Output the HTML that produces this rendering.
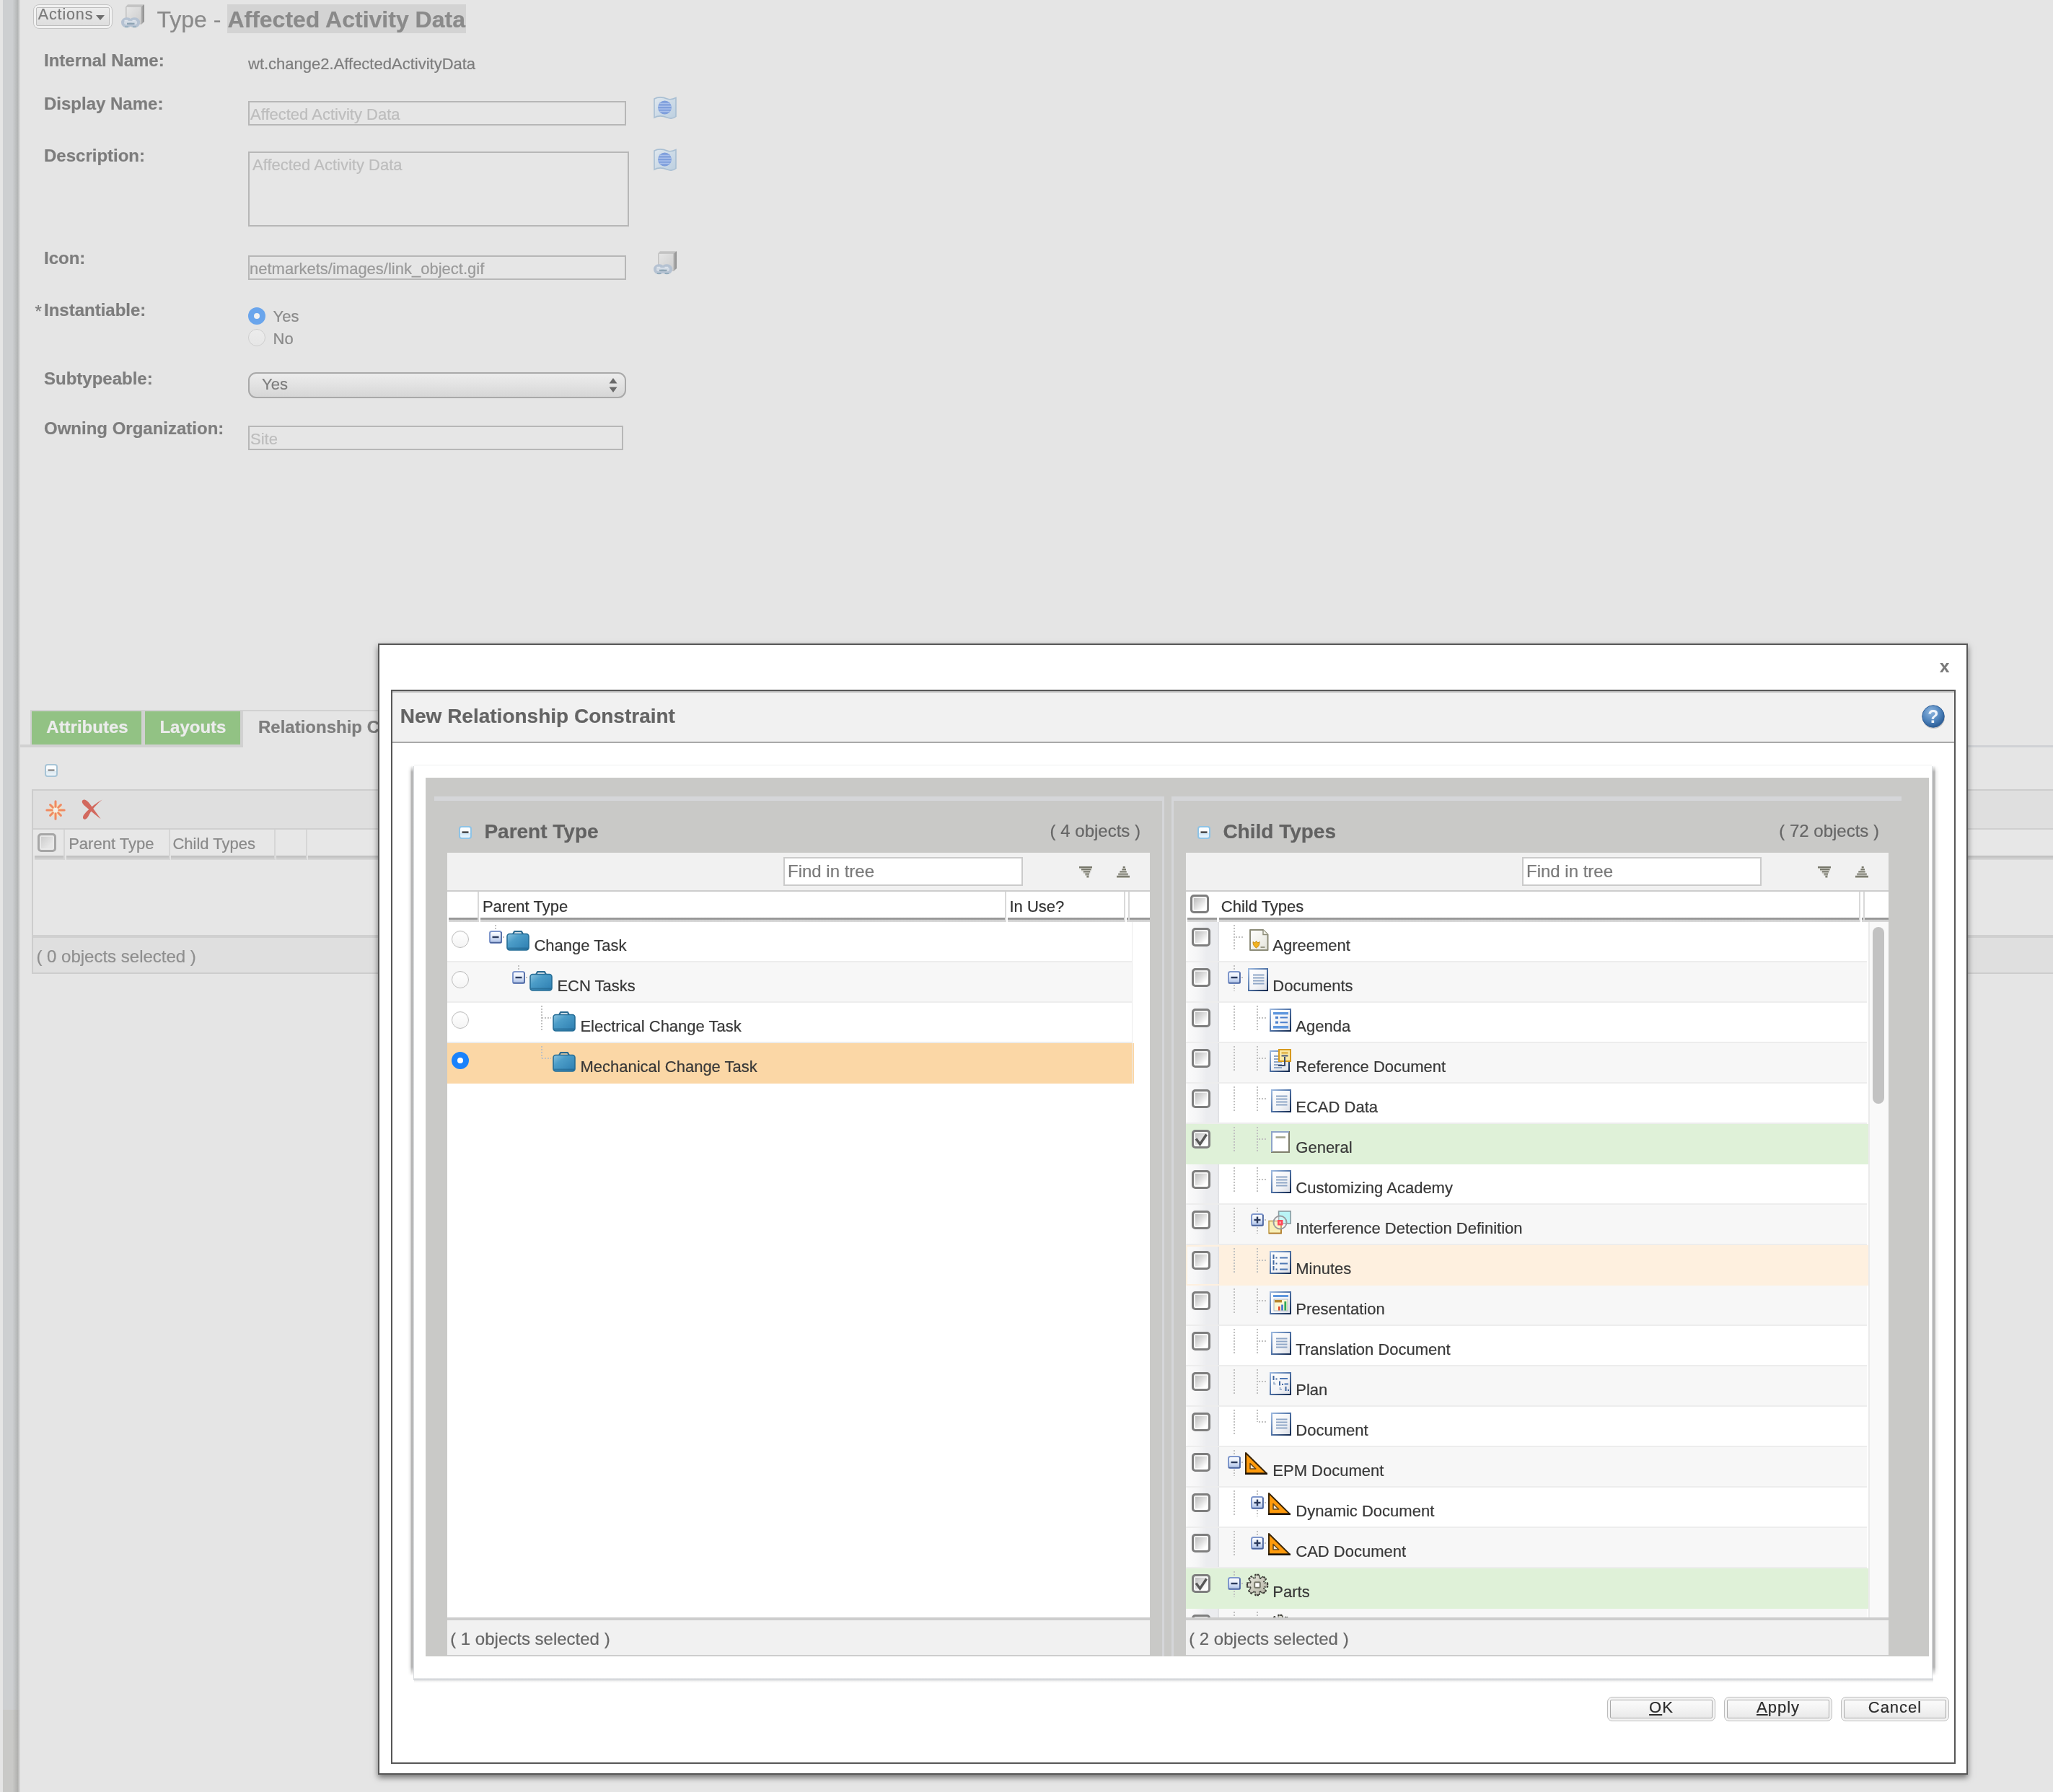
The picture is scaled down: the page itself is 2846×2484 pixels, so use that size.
<!DOCTYPE html>
<html><head><meta charset="utf-8"><title>Type - Affected Activity Data</title>
<style>
html,body{margin:0;padding:0;}
body{width:2846px;height:2484px;overflow:hidden;background:#e5e5e5;font-family:"Liberation Sans", Arial, sans-serif;position:relative;}
.a{position:absolute;box-sizing:border-box;}
.t{position:absolute;white-space:nowrap;-webkit-text-stroke:.22px currentColor;}
svg{position:absolute;overflow:visible;}
.cb{position:absolute;box-sizing:border-box;width:26px;height:26px;border:3px solid #7e7e7e;border-radius:5px;background:linear-gradient(135deg,#b4b4b4 0%,#dcdcdc 45%,#ffffff 80%);box-shadow:inset 0 0 0 2px rgba(255,255,255,.75);}
</style></head><body><div id="root" style="position:absolute;left:0;top:0;width:2846px;height:2484px;will-change:transform;">
<div class="a" style="left:4px;top:0px;width:24px;height:2370px;background:linear-gradient(90deg,#cdcfd1 0,#cdcfd1 56%,#b3b5b5 86%,#e0e0e0 100%);"></div><div class="a" style="left:4px;top:2370px;width:24px;height:114px;background:linear-gradient(90deg,#c9c9c7 0,#c9c9c7 56%,#b0b0ae 86%,#dedede 100%);"></div><div class="a" style="left:46px;top:6px;width:110px;height:34px;border:1px solid #c4c4c4;border-radius:8px;background:#f1f1f1;"></div><div class="a" style="left:50px;top:10px;width:102px;height:26px;border:1px solid #bdbdbd;border-radius:2px;background:linear-gradient(#ececec,#dedede);"></div><div class="t" style="left:52.8px;top:10.4px;font-size:21.5px;line-height:21.5px;color:#7a7a7a;letter-spacing:.85px;">Actions</div><svg style="left:133px;top:21px;" width="12" height="7" viewBox="0 0 12 7"><path d="M0 0 H12 L6 7 Z" fill="#6e6e6e"/></svg><svg style="left:168px;top:6px;" width="32" height="34" viewBox="0 0 32 34"><defs><linearGradient id="g1" x1="0" y1="0" x2="1" y2="1"><stop offset="0" stop-color="#e6e6e6"/><stop offset="1" stop-color="#cdcdcd"/></linearGradient>
<linearGradient id="g1s" x1="0" y1="0" x2="1" y2="0"><stop offset="0" stop-color="#b4b4b4"/><stop offset="1" stop-color="#8c8c8c"/></linearGradient></defs>
<g style="filter:blur(.45px)"><path d="M6 3.4 L9 0.2 H32 V24 L28.4 27.7 H6 Z" fill="#c3c3c3"/>
<path d="M27.4 3.8 L32 0.2 V24 L27.4 27.7 Z" fill="url(#g1s)"/>
<rect x="7.6" y="3.9" width="19.8" height="22.4" fill="url(#g1)"/></g>
<g style="filter:blur(.7px)">
<rect x="2" y="20.2" width="11.5" height="10" rx="5" fill="#d3dbe5" stroke="#b5c2d2" stroke-width="4"/>
<rect x="12.6" y="20.2" width="11.5" height="10" rx="5" fill="#d3dbe5" stroke="#b5c2d2" stroke-width="4"/>
<path d="M7.5 24.2 H18.5" stroke="#d4dce6" stroke-width="2.6"/>
<path d="M8 26.8 H18.5" stroke="#8da3b3" stroke-width="2.2"/>
<path d="M5 31.2 H10 M16 31.2 H21" stroke="#8aa6b6" stroke-width="1.6"/>
<path d="M4.5 22.5 H9 M15.5 22.5 H20" stroke="#dde4ec" stroke-width="1.6"/>
</g></svg><div class="a" style="left:315px;top:6px;width:331px;height:40px;background:#d3d3d3;"></div><div class="t" style="left:217.4px;top:10.6px;font-size:32px;line-height:32px;color:#8a8a8a;">Type - </div><div class="t" style="left:315.4px;top:10.6px;font-size:32px;line-height:32px;color:#8a8a8a;font-weight:bold;">Affected Activity Data</div><div class="t" style="left:61px;top:71.7px;font-size:24px;line-height:24px;color:#7d7d7d;font-weight:bold;">Internal Name:</div><div class="t" style="left:61px;top:132.2px;font-size:24px;line-height:24px;color:#7d7d7d;font-weight:bold;">Display Name:</div><div class="t" style="left:61px;top:203.7px;font-size:24px;line-height:24px;color:#7d7d7d;font-weight:bold;">Description:</div><div class="t" style="left:61px;top:346.4px;font-size:24px;line-height:24px;color:#7d7d7d;font-weight:bold;">Icon:</div><div class="t" style="left:61px;top:417.5px;font-size:24px;line-height:24px;color:#7d7d7d;font-weight:bold;">Instantiable:</div><div class="t" style="left:61px;top:512.5px;font-size:24px;line-height:24px;color:#7d7d7d;font-weight:bold;">Subtypeable:</div><div class="t" style="left:61px;top:582.2px;font-size:24px;line-height:24px;color:#7d7d7d;font-weight:bold;">Owning Organization:</div><div class="t" style="left:48.5px;top:419.7px;font-size:24px;line-height:24px;color:#7d7d7d;">*</div><div class="t" style="left:344px;top:77.9px;font-size:22px;line-height:22px;color:#7d7d7d;">wt.change2.AffectedActivityData</div><div class="a" style="left:344px;top:140px;width:524px;height:34px;border:2px solid #b7b7b7;background:#e6e6e6;"></div><div class="t" style="left:347px;top:148.0px;font-size:22px;line-height:22px;color:#bdbdbd;">Affected Activity Data</div><div class="a" style="left:344px;top:210px;width:528px;height:104px;border:2px solid #b7b7b7;background:#e6e6e6;"></div><div class="t" style="left:350px;top:218.2px;font-size:22px;line-height:22px;color:#bdbdbd;">Affected Activity Data</div><div class="a" style="left:344px;top:354px;width:524px;height:34px;border:2px solid #b7b7b7;background:#e6e6e6;"></div><div class="t" style="left:346px;top:361.8px;font-size:22px;line-height:22px;color:#9a9a9a;">netmarkets/images/link_object.gif</div><svg style="left:906px;top:134px;" width="32" height="32" viewBox="0 0 32 32"><defs><linearGradient id="g2" x1="0" y1="0" x2="1" y2="1"><stop offset="0" stop-color="#dfe7ee"/><stop offset="1" stop-color="#bccfe0"/></linearGradient></defs>
<path d="M1 3 C8 -1 14 1 19 3 C24 5 28 3 31 1.5 V27.5 C28 30 24 31 19 29 C14 27 8 25 1 29 Z" fill="url(#g2)" stroke="#a9bfd3" stroke-width="1.6"/>
<circle cx="15.5" cy="15" r="9.4" fill="#7f9fdc"/>
<path d="M8.4 9.5 H22.6 M6.6 13.2 H24.4 M6.6 16.9 H24.4 M8.4 20.6 H22.6" stroke="#a9c0ea" stroke-width="1.5"/></svg><svg style="left:906px;top:206px;" width="32" height="32" viewBox="0 0 32 32"><defs><linearGradient id="g3" x1="0" y1="0" x2="1" y2="1"><stop offset="0" stop-color="#dfe7ee"/><stop offset="1" stop-color="#bccfe0"/></linearGradient></defs>
<path d="M1 3 C8 -1 14 1 19 3 C24 5 28 3 31 1.5 V27.5 C28 30 24 31 19 29 C14 27 8 25 1 29 Z" fill="url(#g3)" stroke="#a9bfd3" stroke-width="1.6"/>
<circle cx="15.5" cy="15" r="9.4" fill="#7f9fdc"/>
<path d="M8.4 9.5 H22.6 M6.6 13.2 H24.4 M6.6 16.9 H24.4 M8.4 20.6 H22.6" stroke="#a9c0ea" stroke-width="1.5"/></svg><svg style="left:906px;top:348px;" width="32" height="34" viewBox="0 0 32 34"><defs><linearGradient id="g4" x1="0" y1="0" x2="1" y2="1"><stop offset="0" stop-color="#e6e6e6"/><stop offset="1" stop-color="#cdcdcd"/></linearGradient>
<linearGradient id="g4s" x1="0" y1="0" x2="1" y2="0"><stop offset="0" stop-color="#b4b4b4"/><stop offset="1" stop-color="#8c8c8c"/></linearGradient></defs>
<g style="filter:blur(.45px)"><path d="M6 3.4 L9 0.2 H32 V24 L28.4 27.7 H6 Z" fill="#c3c3c3"/>
<path d="M27.4 3.8 L32 0.2 V24 L27.4 27.7 Z" fill="url(#g4s)"/>
<rect x="7.6" y="3.9" width="19.8" height="22.4" fill="url(#g4)"/></g>
<g style="filter:blur(.7px)">
<rect x="2" y="20.2" width="11.5" height="10" rx="5" fill="#d3dbe5" stroke="#b5c2d2" stroke-width="4"/>
<rect x="12.6" y="20.2" width="11.5" height="10" rx="5" fill="#d3dbe5" stroke="#b5c2d2" stroke-width="4"/>
<path d="M7.5 24.2 H18.5" stroke="#d4dce6" stroke-width="2.6"/>
<path d="M8 26.8 H18.5" stroke="#8da3b3" stroke-width="2.2"/>
<path d="M5 31.2 H10 M16 31.2 H21" stroke="#8aa6b6" stroke-width="1.6"/>
<path d="M4.5 22.5 H9 M15.5 22.5 H20" stroke="#dde4ec" stroke-width="1.6"/>
</g></svg><div class="a" style="left:344px;top:426px;width:24px;height:24px;border-radius:50%;background:#6aa5ec;"></div><div class="a" style="left:352px;top:434px;width:8px;height:8px;border-radius:50%;background:#f2f2f2;"></div><div class="t" style="left:378.5px;top:428.4px;font-size:22px;line-height:22px;color:#8a8a8a;">Yes</div><div class="a" style="left:344px;top:456px;width:24px;height:24px;border-radius:50%;border:1.5px solid #cdcdcd;background:linear-gradient(#ececec,#e6e6e6);"></div><div class="t" style="left:378.5px;top:458.6px;font-size:22px;line-height:22px;color:#8a8a8a;">No</div><div class="a" style="left:344px;top:516px;width:524px;height:36px;border:2px solid #a9a9a9;border-radius:11px;background:linear-gradient(#ececec,#e2e2e2 50%,#d6d6d6);"></div><div class="t" style="left:363px;top:522.4px;font-size:22px;line-height:22px;color:#7d7d7d;">Yes</div><svg style="left:844px;top:524px;" width="12" height="20" viewBox="0 0 12 20"><path d="M6 0 L11.5 7.5 H0.5 Z M0.5 12.5 H11.5 L6 20 Z" fill="#6a6a6a"/></svg><div class="a" style="left:344px;top:590px;width:520px;height:34px;border:2px solid #b7b7b7;background:#e6e6e6;"></div><div class="t" style="left:347px;top:598.0px;font-size:22px;line-height:22px;color:#bdbdbd;">Site</div><div class="a" style="left:42px;top:984px;width:640px;height:2px;background:#d1d1d1;"></div><div class="a" style="left:680px;top:1033px;width:2166px;height:3px;background:#d0d2d5;"></div><div class="a" style="left:28px;top:1032px;width:309px;height:4px;background:#d1d1d1;"></div><div class="a" style="left:42px;top:984px;width:156px;height:50px;border:2px solid #d1d1d1;background:#92c284;"></div><div class="a" style="left:198px;top:984px;width:137px;height:50px;border:2px solid #d1d1d1;border-left-width:3px;background:#92c284;"></div><div class="a" style="left:335px;top:984px;width:2px;height:50px;background:#d1d1d1;"></div><div class="t" style="left:64.3px;top:995.7px;font-size:24px;line-height:24px;color:#ececec;font-weight:bold;">Attributes</div><div class="t" style="left:221.4px;top:995.7px;font-size:24px;line-height:24px;color:#ececec;font-weight:bold;">Layouts</div><div class="t" style="left:358px;top:995.7px;font-size:24px;line-height:24px;color:#7d7d7d;font-weight:bold;">Relationship Constraints</div><svg style="left:62px;top:1059px;" width="18" height="18" viewBox="0 0 18 18"><defs><linearGradient id="g5" x1="0" y1="0" x2="0" y2="1"><stop offset="0" stop-color="#ffffff"/><stop offset=".55" stop-color="#f4f9fd"/><stop offset=".56" stop-color="#dbe8f0"/><stop offset="1" stop-color="#f2f8fc"/></linearGradient></defs>
<rect x="1" y="1" width="16" height="16" rx="3" fill="url(#g5)" stroke="#a7c4d6" stroke-width="2"/>
<path d="M4.5 8.6 H13.5" stroke="#8a8a8a" stroke-width="2.4"/></svg><div class="a" style="left:44px;top:1094px;width:2810px;height:256px;border:2px solid #cdcdcd;"></div><div class="a" style="left:46px;top:1096px;width:2800px;height:52px;background:#dfdfdf;"></div><div class="a" style="left:46px;top:1148px;width:2800px;height:2px;background:#cfcfcf;"></div><svg style="left:63px;top:1109px;" width="28" height="28" viewBox="0 0 28 28"><circle cx="14" cy="14" r="9" fill="#f6e3bd" opacity=".8"/><circle cx="14" cy="14" r="3.2" fill="#f3efe9"/><path d="M18.8 14.0 L26.2 14.0" stroke="#f08a62" stroke-width="3" stroke-linecap="round"/><path d="M17.7 17.7 L21.4 21.4" stroke="#f08a62" stroke-width="3" stroke-linecap="round"/><path d="M14.0 18.8 L14.0 26.2" stroke="#f08a62" stroke-width="3" stroke-linecap="round"/><path d="M10.3 17.7 L6.6 21.4" stroke="#f08a62" stroke-width="3" stroke-linecap="round"/><path d="M9.2 14.0 L1.8 14.0" stroke="#f08a62" stroke-width="3" stroke-linecap="round"/><path d="M10.3 10.3 L6.6 6.6" stroke="#f08a62" stroke-width="3" stroke-linecap="round"/><path d="M14.0 9.2 L14.0 1.8" stroke="#f08a62" stroke-width="3" stroke-linecap="round"/><path d="M17.7 10.3 L21.4 6.6" stroke="#f08a62" stroke-width="3" stroke-linecap="round"/></svg><svg style="left:113px;top:1107.5px;filter:blur(.55px);" width="29" height="28" viewBox="0 0 29 28"><path d="M0.8 3.6 C0.4 1 3 -0.2 5.6 1 C8.2 2.2 10.2 4.6 12.2 7.2 C17 13.6 22 20.6 26.6 27 C20 22.2 11 14.8 3.6 8.2 C1.9 6.7 1 5.1 0.8 3.6 Z" fill="#d2695e"/>
<path d="M28.6 0.4 C22 6 14.2 14 10.6 21.2 C9.3 23.8 8 26.5 5.6 27.5 C3.4 28.3 1.6 26.9 2 24.4 C2.4 22 4.6 19.6 7 17 C13 10.6 21 4.6 28.6 0.4 Z" fill="#d2695e"/></svg><div class="a" style="left:46px;top:1150px;width:2800px;height:36px;background:#e7e7e7;"></div><div class="a" style="left:48px;top:1186px;width:40px;height:6px;background:linear-gradient(#bdbdbd,#c9c9c9 50%,#dadada);"></div><div class="a" style="left:88px;top:1150px;width:2px;height:42px;background:#d6d6d6;"></div><div class="a" style="left:92px;top:1186px;width:141.5px;height:6px;background:linear-gradient(#bdbdbd,#c9c9c9 50%,#dadada);"></div><div class="a" style="left:233.5px;top:1150px;width:2px;height:42px;background:#d6d6d6;"></div><div class="a" style="left:237px;top:1186px;width:142.5px;height:6px;background:linear-gradient(#bdbdbd,#c9c9c9 50%,#dadada);"></div><div class="a" style="left:379.5px;top:1150px;width:2px;height:42px;background:#d6d6d6;"></div><div class="a" style="left:383px;top:1186px;width:40.5px;height:6px;background:linear-gradient(#bdbdbd,#c9c9c9 50%,#dadada);"></div><div class="a" style="left:423.5px;top:1150px;width:2px;height:42px;background:#d6d6d6;"></div><div class="a" style="left:427px;top:1186px;width:2419px;height:6px;background:linear-gradient(#bdbdbd,#c9c9c9 50%,#dadada);"></div><div class="a" style="left:2846px;top:1150px;width:2px;height:42px;background:#d6d6d6;"></div><div class="cb" style="left:52px;top:1155px;border-color:#a6a6a6;background:linear-gradient(135deg,#c9c9c9,#e6e6e6 70%);box-shadow:inset 0 0 0 2px rgba(235,235,235,.8);"></div><div class="t" style="left:95.2px;top:1159.4px;font-size:22px;line-height:22px;color:#8a8a8a;">Parent Type</div><div class="t" style="left:239.4px;top:1159.4px;font-size:22px;line-height:22px;color:#8a8a8a;">Child Types</div><div class="a" style="left:46px;top:1192px;width:2800px;height:104px;background:#e6e6e6;"></div><div class="a" style="left:46px;top:1296px;width:2800px;height:4px;background:#d0d0d0;"></div><div class="a" style="left:46px;top:1300px;width:2800px;height:48px;background:#dfdfdf;"></div><div class="t" style="left:50.4px;top:1314.3px;font-size:24px;line-height:24px;color:#8f8f8f;">( 0 objects selected )</div><div class="a" style="left:524px;top:892px;width:2204px;height:1568px;border:2px solid #575757;background:#fff;box-shadow:0 4px 8px 0 rgba(0,0,0,.5);"></div><div class="t" style="left:2689px;top:911.7px;font-size:24px;line-height:24px;color:#7a7a7a;font-weight:bold;">x</div><div class="a" style="left:542px;top:956px;width:2169px;height:1489px;border:2px solid #575757;background:#fff;"></div><div class="a" style="left:544px;top:958px;width:2165px;height:70px;background:#f1f1f1;border-top:2px solid #bcbcbc;"></div><div class="a" style="left:544px;top:1028px;width:2165px;height:2px;background:#a9a9a9;"></div><div class="t" style="left:554.8px;top:978.9px;font-size:28px;line-height:28px;color:#646464;font-weight:bold;">New Relationship Constraint</div><svg style="left:2664px;top:977px;" width="33" height="34" viewBox="0 0 33 34"><defs><radialGradient id="g6" cx=".4" cy=".3" r=".8"><stop offset="0" stop-color="#8fb7e0"/><stop offset=".55" stop-color="#4d82bb"/><stop offset="1" stop-color="#1f4f88"/></radialGradient></defs>
<circle cx="16.5" cy="17.5" r="15.5" fill="#000" opacity=".18"/>
<circle cx="16" cy="16" r="15.2" fill="url(#g6)" stroke="#2f5f98" stroke-width="1"/>
<text x="16" y="25" text-anchor="middle" font-family="Liberation Sans, Arial, sans-serif" font-weight="bold" font-size="25" fill="#eef4fb">?</text></svg><div class="a" style="left:565px;top:1061px;width:8.7px;height:1262px;background:linear-gradient(90deg,rgba(0,0,0,0) 0,rgba(0,0,0,.05) 30%,rgba(0,0,0,.15) 48%,rgba(0,0,0,.29) 60%,rgba(0,0,0,.29) 82%,rgba(110,118,130,.28) 88%,rgba(110,118,130,.28) 100%);-webkit-mask-image:linear-gradient(180deg,transparent 0,#000 9px,#000 calc(100% - 12px),transparent 100%);mask-image:linear-gradient(180deg,transparent 0,#000 9px,#000 calc(100% - 12px),transparent 100%);"></div><div class="a" style="left:2678px;top:1061px;width:10px;height:1262px;background:linear-gradient(270deg,rgba(0,0,0,0) 0,rgba(0,0,0,.05) 35%,rgba(0,0,0,.15) 52%,rgba(0,0,0,.29) 63%,rgba(0,0,0,.29) 85%,rgba(110,118,130,.28) 89%,rgba(110,118,130,.28) 100%);-webkit-mask-image:linear-gradient(180deg,transparent 0,#000 9px,#000 calc(100% - 12px),transparent 100%);mask-image:linear-gradient(180deg,transparent 0,#000 9px,#000 calc(100% - 12px),transparent 100%);"></div><div class="a" style="left:574px;top:2325.5px;width:2106px;height:7px;background:linear-gradient(180deg,rgba(110,118,130,.0) 0,rgba(110,118,130,.28) 12%,rgba(110,118,130,.28) 42%,rgba(0,0,0,.06) 55%,rgba(0,0,0,0) 100%);"></div><div class="a" style="left:574px;top:1059.5px;width:2104px;height:1.5px;background:#eef0f0;"></div><div class="a" style="left:572.5px;top:1062px;width:1.4px;height:1266.5px;background:#dadcdf;"></div><div class="a" style="left:2678px;top:1062px;width:1.4px;height:1266.5px;background:#dadcdf;"></div><div class="a" style="left:573.7px;top:1060.5px;width:2104.5px;height:1265.3px;background:#fff;"></div><div class="a" style="left:590px;top:1078px;width:2084px;height:1218px;background:#c9c9c7;"></div><div class="a" style="left:602px;top:1104px;width:1012px;height:6px;background:#d5d6d9;"></div><div class="a" style="left:1611px;top:1104px;width:3px;height:1192px;background:#d5d6d9;"></div><div class="a" style="left:1624px;top:1104px;width:1012px;height:6px;background:#d5d6d9;"></div><div class="a" style="left:1624px;top:1104px;width:3px;height:1192px;background:#d5d6d9;"></div><svg style="left:636px;top:1145px;" width="18" height="18" viewBox="0 0 18 18"><defs><linearGradient id="g7" x1="0" y1="0" x2="0" y2="1"><stop offset="0" stop-color="#ffffff"/><stop offset=".55" stop-color="#f4f9fd"/><stop offset=".56" stop-color="#cfe7f8"/><stop offset="1" stop-color="#f2f8fc"/></linearGradient></defs>
<rect x="1" y="1" width="16" height="16" rx="3" fill="url(#g7)" stroke="#8ec3e6" stroke-width="2"/>
<path d="M4.5 8.6 H13.5" stroke="#3c3c3c" stroke-width="2.4"/></svg><div class="t" style="left:671.4px;top:1139.3px;font-size:28px;line-height:28px;color:#626262;font-weight:bold;">Parent Type</div><div class="t" style="right:1265px;top:1140.0px;font-size:24px;line-height:24px;color:#666;">( 4 objects )</div><div class="a" style="left:620px;top:1182px;width:974px;height:52px;background:#f1f1f1;"></div><div class="a" style="left:620px;top:1234px;width:974px;height:2px;background:#cdcdcd;"></div><div class="a" style="left:1086px;top:1188px;width:332px;height:40px;border:2px solid #cbcbcb;background:#fff;"></div><div class="t" style="left:1092px;top:1196.2px;font-size:24px;line-height:24px;color:#7a7a7a;">Find in tree</div><svg style="left:1496px;top:1199.5px;" width="19" height="17" viewBox="0 0 19 17"><rect x="0.0" y="1.0" width="18" height="2.1" fill="#76766a"/><rect x="0.0" y="3.1" width="18" height="1.1" fill="#b9b9ae"/><rect x="3.0" y="4.2" width="13.6" height="2.1" fill="#76766a"/><rect x="3.0" y="6.3" width="13.6" height="1.1" fill="#b9b9ae"/><rect x="5.8" y="7.4" width="9.4" height="2.1" fill="#76766a"/><rect x="5.8" y="9.5" width="9.4" height="1.1" fill="#b9b9ae"/><rect x="8.4" y="10.6" width="5.6" height="2.1" fill="#76766a"/><rect x="8.4" y="12.7" width="5.6" height="1.1" fill="#b9b9ae"/><rect x="10.4" y="13.8" width="3" height="2.1" fill="#76766a"/><rect x="10.4" y="15.9" width="3" height="1.1" fill="#b9b9ae"/></svg><svg style="left:1548px;top:1199.5px;" width="19" height="17" viewBox="0 0 19 17"><rect x="0.0" y="13.8" width="18" height="2.1" fill="#76766a"/><rect x="0.0" y="15.9" width="18" height="1.1" fill="#b9b9ae"/><rect x="2.2" y="10.6" width="13.6" height="2.1" fill="#76766a"/><rect x="2.2" y="12.7" width="13.6" height="1.1" fill="#b9b9ae"/><rect x="4.3" y="7.4" width="9.4" height="2.1" fill="#76766a"/><rect x="4.3" y="9.5" width="9.4" height="1.1" fill="#b9b9ae"/><rect x="7.4" y="4.2" width="5.6" height="2.1" fill="#76766a"/><rect x="7.4" y="6.3" width="5.6" height="1.1" fill="#b9b9ae"/><rect x="8.7" y="1.0" width="3" height="2.1" fill="#76766a"/><rect x="8.7" y="3.1" width="3" height="1.1" fill="#b9b9ae"/></svg><div class="a" style="left:620px;top:1236px;width:974px;height:42px;background:#fff;"></div><div class="a" style="left:620px;top:1278px;width:974px;height:964px;background:#fff;"></div><div class="a" style="left:620px;top:2242px;width:974px;height:4px;background:#cdcdcd;"></div><div class="a" style="left:620px;top:2246px;width:974px;height:48px;background:#f1f1f1;"></div><div class="a" style="left:620px;top:2294px;width:974px;height:2px;background:#cdcdcd;"></div><div class="t" style="left:624.2px;top:2260.3px;font-size:24px;line-height:24px;color:#666;">( 1 objects selected )</div><svg style="left:1660px;top:1145px;" width="18" height="18" viewBox="0 0 18 18"><defs><linearGradient id="g8" x1="0" y1="0" x2="0" y2="1"><stop offset="0" stop-color="#ffffff"/><stop offset=".55" stop-color="#f4f9fd"/><stop offset=".56" stop-color="#cfe7f8"/><stop offset="1" stop-color="#f2f8fc"/></linearGradient></defs>
<rect x="1" y="1" width="16" height="16" rx="3" fill="url(#g8)" stroke="#8ec3e6" stroke-width="2"/>
<path d="M4.5 8.6 H13.5" stroke="#3c3c3c" stroke-width="2.4"/></svg><div class="t" style="left:1695.4px;top:1139.3px;font-size:28px;line-height:28px;color:#626262;font-weight:bold;">Child Types</div><div class="t" style="right:241px;top:1140.0px;font-size:24px;line-height:24px;color:#666;">( 72 objects )</div><div class="a" style="left:1644px;top:1182px;width:974px;height:52px;background:#f1f1f1;"></div><div class="a" style="left:1644px;top:1234px;width:974px;height:2px;background:#cdcdcd;"></div><div class="a" style="left:2110px;top:1188px;width:332px;height:40px;border:2px solid #cbcbcb;background:#fff;"></div><div class="t" style="left:2116px;top:1196.2px;font-size:24px;line-height:24px;color:#7a7a7a;">Find in tree</div><svg style="left:2520px;top:1199.5px;" width="19" height="17" viewBox="0 0 19 17"><rect x="0.0" y="1.0" width="18" height="2.1" fill="#76766a"/><rect x="0.0" y="3.1" width="18" height="1.1" fill="#b9b9ae"/><rect x="3.0" y="4.2" width="13.6" height="2.1" fill="#76766a"/><rect x="3.0" y="6.3" width="13.6" height="1.1" fill="#b9b9ae"/><rect x="5.8" y="7.4" width="9.4" height="2.1" fill="#76766a"/><rect x="5.8" y="9.5" width="9.4" height="1.1" fill="#b9b9ae"/><rect x="8.4" y="10.6" width="5.6" height="2.1" fill="#76766a"/><rect x="8.4" y="12.7" width="5.6" height="1.1" fill="#b9b9ae"/><rect x="10.4" y="13.8" width="3" height="2.1" fill="#76766a"/><rect x="10.4" y="15.9" width="3" height="1.1" fill="#b9b9ae"/></svg><svg style="left:2572px;top:1199.5px;" width="19" height="17" viewBox="0 0 19 17"><rect x="0.0" y="13.8" width="18" height="2.1" fill="#76766a"/><rect x="0.0" y="15.9" width="18" height="1.1" fill="#b9b9ae"/><rect x="2.2" y="10.6" width="13.6" height="2.1" fill="#76766a"/><rect x="2.2" y="12.7" width="13.6" height="1.1" fill="#b9b9ae"/><rect x="4.3" y="7.4" width="9.4" height="2.1" fill="#76766a"/><rect x="4.3" y="9.5" width="9.4" height="1.1" fill="#b9b9ae"/><rect x="7.4" y="4.2" width="5.6" height="2.1" fill="#76766a"/><rect x="7.4" y="6.3" width="5.6" height="1.1" fill="#b9b9ae"/><rect x="8.7" y="1.0" width="3" height="2.1" fill="#76766a"/><rect x="8.7" y="3.1" width="3" height="1.1" fill="#b9b9ae"/></svg><div class="a" style="left:1644px;top:1236px;width:974px;height:42px;background:#fff;"></div><div class="a" style="left:1644px;top:1278px;width:974px;height:964px;background:#fff;"></div><div class="a" style="left:1644px;top:2242px;width:974px;height:4px;background:#cdcdcd;"></div><div class="a" style="left:1644px;top:2246px;width:974px;height:48px;background:#f1f1f1;"></div><div class="a" style="left:1644px;top:2294px;width:974px;height:2px;background:#cdcdcd;"></div><div class="t" style="left:1648.2px;top:2260.3px;font-size:24px;line-height:24px;color:#666;">( 2 objects selected )</div><div class="a" style="left:622px;top:1272px;width:40px;height:6px;background:linear-gradient(#8f8f8f,#a3a3a3 45%,#cfcfcf 55%,#d9d9d9);"></div><div class="a" style="left:662px;top:1236px;width:2px;height:42px;background:#d9d9d9;"></div><div class="a" style="left:666px;top:1272px;width:727px;height:6px;background:linear-gradient(#8f8f8f,#a3a3a3 45%,#cfcfcf 55%,#d9d9d9);"></div><div class="a" style="left:1393px;top:1236px;width:2px;height:42px;background:#d9d9d9;"></div><div class="a" style="left:1397px;top:1272px;width:161px;height:6px;background:linear-gradient(#8f8f8f,#a3a3a3 45%,#cfcfcf 55%,#d9d9d9);"></div><div class="a" style="left:1558px;top:1236px;width:2px;height:42px;background:#d9d9d9;"></div><div class="a" style="left:1562px;top:1272px;width:1.599999999999909px;height:6px;background:linear-gradient(#8f8f8f,#a3a3a3 45%,#cfcfcf 55%,#d9d9d9);"></div><div class="a" style="left:1563.6px;top:1236px;width:2px;height:42px;background:#d9d9d9;"></div><div class="a" style="left:1566px;top:1272px;width:28px;height:6px;background:linear-gradient(#8f8f8f,#a3a3a3 45%,#cfcfcf 55%,#d9d9d9);"></div><div class="t" style="left:668.9px;top:1245.8px;font-size:22px;line-height:22px;color:#333;">Parent Type</div><div class="t" style="left:1399.5px;top:1245.8px;font-size:22px;line-height:22px;color:#333;">In Use?</div><div class="a" style="left:1646px;top:1272px;width:40.5px;height:6px;background:linear-gradient(#8f8f8f,#a3a3a3 45%,#cfcfcf 55%,#d9d9d9);"></div><div class="a" style="left:1690px;top:1272px;width:887px;height:6px;background:linear-gradient(#8f8f8f,#a3a3a3 45%,#cfcfcf 55%,#d9d9d9);"></div><div class="a" style="left:2577px;top:1236px;width:2px;height:42px;background:#d9d9d9;"></div><div class="a" style="left:2581px;top:1272px;width:1.599999999999909px;height:6px;background:linear-gradient(#8f8f8f,#a3a3a3 45%,#cfcfcf 55%,#d9d9d9);"></div><div class="a" style="left:2582.6px;top:1236px;width:2px;height:42px;background:#d9d9d9;"></div><div class="a" style="left:2585px;top:1272px;width:33px;height:6px;background:linear-gradient(#8f8f8f,#a3a3a3 45%,#cfcfcf 55%,#d9d9d9);"></div><div class="cb" style="left:1650px;top:1240px;"></div><div class="t" style="left:1692.8px;top:1245.8px;font-size:22px;line-height:22px;color:#333;">Child Types</div><div class="a" style="left:620px;top:1278px;width:950px;height:54px;background:#fff;"></div><div class="a" style="left:620px;top:1332px;width:950px;height:2px;background:#ededed;"></div><div class="a" style="left:626px;top:1290px;width:24px;height:24px;border-radius:50%;border:1.5px solid #bdbdbd;background:linear-gradient(#fff,#f4f4f4);box-shadow:inset 0 1px 1px rgba(0,0,0,.06);"></div><div class="a" style="left:686px;top:1282px;width:2px;height:8px;background:repeating-linear-gradient(180deg,#c1c1c1 0 2px,transparent 2px 4px);"></div><svg style="left:678px;top:1290.3px;" width="18" height="18" viewBox="0 0 18 18"><defs><linearGradient id="g9" x1="0" y1="0" x2="0" y2="1"><stop offset="0" stop-color="#ffffff"/><stop offset=".45" stop-color="#e4ecfa"/><stop offset="1" stop-color="#a9bee6"/></linearGradient></defs>
<rect x="1" y="1" width="16" height="16" rx="2.5" fill="url(#g9)" stroke="#7f97cc" stroke-width="2"/>
<path d="M1.2 16.4 H16.8 V2" fill="none" stroke="#4a6299" stroke-width="1.5" stroke-linejoin="round"/>
<path d="M4.5 9 H13.5" stroke="#2b3a5c" stroke-width="2.4"/></svg><div class="a" style="left:697px;top:1298px;width:4px;height:2px;background:repeating-linear-gradient(90deg,#c1c1c1 0 2px,transparent 2px 4px);"></div><svg style="left:702px;top:1289.6px;" width="32" height="28" viewBox="0 0 32 28"><defs><linearGradient id="g10" x1="0" y1="0" x2="1" y2="1"><stop offset="0" stop-color="#8cc3df"/><stop offset=".35" stop-color="#4c9dc8"/><stop offset="1" stop-color="#2c7db0"/></linearGradient></defs>
<path d="M9 5 L11 1.2 H21 L23 5" fill="none" stroke="#2a6a90" stroke-width="2.2" stroke-linejoin="round"/>
<rect x="1" y="4.5" width="30" height="22.5" rx="3.5" fill="url(#g10)" stroke="#256d96" stroke-width="1.6"/>
<path d="M2 24.5 H30" stroke="#1f5f86" stroke-width="2" opacity=".55"/></svg><div class="t" style="left:740.4px;top:1300.2px;font-size:22px;line-height:22px;color:#383838;">Change Task</div><div class="a" style="left:620px;top:1334px;width:950px;height:54px;background:#f7f7f7;"></div><div class="a" style="left:620px;top:1388px;width:950px;height:2px;background:#ededed;"></div><div class="a" style="left:626px;top:1346px;width:24px;height:24px;border-radius:50%;border:1.5px solid #bdbdbd;background:linear-gradient(#fff,#f4f4f4);box-shadow:inset 0 1px 1px rgba(0,0,0,.06);"></div><div class="a" style="left:718px;top:1338px;width:2px;height:8px;background:repeating-linear-gradient(180deg,#c1c1c1 0 2px,transparent 2px 4px);"></div><svg style="left:710px;top:1346.3px;" width="18" height="18" viewBox="0 0 18 18"><defs><linearGradient id="g11" x1="0" y1="0" x2="0" y2="1"><stop offset="0" stop-color="#ffffff"/><stop offset=".45" stop-color="#e4ecfa"/><stop offset="1" stop-color="#a9bee6"/></linearGradient></defs>
<rect x="1" y="1" width="16" height="16" rx="2.5" fill="url(#g11)" stroke="#7f97cc" stroke-width="2"/>
<path d="M1.2 16.4 H16.8 V2" fill="none" stroke="#4a6299" stroke-width="1.5" stroke-linejoin="round"/>
<path d="M4.5 9 H13.5" stroke="#2b3a5c" stroke-width="2.4"/></svg><div class="a" style="left:729px;top:1354px;width:4px;height:2px;background:repeating-linear-gradient(90deg,#c1c1c1 0 2px,transparent 2px 4px);"></div><svg style="left:734px;top:1345.6px;" width="32" height="28" viewBox="0 0 32 28"><defs><linearGradient id="g12" x1="0" y1="0" x2="1" y2="1"><stop offset="0" stop-color="#8cc3df"/><stop offset=".35" stop-color="#4c9dc8"/><stop offset="1" stop-color="#2c7db0"/></linearGradient></defs>
<path d="M9 5 L11 1.2 H21 L23 5" fill="none" stroke="#2a6a90" stroke-width="2.2" stroke-linejoin="round"/>
<rect x="1" y="4.5" width="30" height="22.5" rx="3.5" fill="url(#g12)" stroke="#256d96" stroke-width="1.6"/>
<path d="M2 24.5 H30" stroke="#1f5f86" stroke-width="2" opacity=".55"/></svg><div class="t" style="left:772.4px;top:1356.2px;font-size:22px;line-height:22px;color:#383838;">ECN Tasks</div><div class="a" style="left:620px;top:1390px;width:950px;height:54px;background:#fff;"></div><div class="a" style="left:620px;top:1444px;width:950px;height:2px;background:#ededed;"></div><div class="a" style="left:626px;top:1402px;width:24px;height:24px;border-radius:50%;border:1.5px solid #bdbdbd;background:linear-gradient(#fff,#f4f4f4);box-shadow:inset 0 1px 1px rgba(0,0,0,.06);"></div><div class="a" style="left:750px;top:1394px;width:2px;height:36px;background:repeating-linear-gradient(180deg,#c1c1c1 0 2px,transparent 2px 4px);"></div><div class="a" style="left:751px;top:1410px;width:13px;height:2px;background:repeating-linear-gradient(90deg,#c1c1c1 0 2px,transparent 2px 4px);"></div><svg style="left:766px;top:1401.6px;" width="32" height="28" viewBox="0 0 32 28"><defs><linearGradient id="g13" x1="0" y1="0" x2="1" y2="1"><stop offset="0" stop-color="#8cc3df"/><stop offset=".35" stop-color="#4c9dc8"/><stop offset="1" stop-color="#2c7db0"/></linearGradient></defs>
<path d="M9 5 L11 1.2 H21 L23 5" fill="none" stroke="#2a6a90" stroke-width="2.2" stroke-linejoin="round"/>
<rect x="1" y="4.5" width="30" height="22.5" rx="3.5" fill="url(#g13)" stroke="#256d96" stroke-width="1.6"/>
<path d="M2 24.5 H30" stroke="#1f5f86" stroke-width="2" opacity=".55"/></svg><div class="t" style="left:804.4px;top:1412.2px;font-size:22px;line-height:22px;color:#383838;">Electrical Change Task</div><div class="a" style="left:620px;top:1446px;width:952px;height:56px;background:#fbd7a6;"></div><div class="a" style="left:626px;top:1458px;width:24px;height:24px;border-radius:50%;background:#1a82fb;"></div><div class="a" style="left:634px;top:1466px;width:8px;height:8px;border-radius:50%;background:#fff;"></div><div class="a" style="left:750px;top:1450px;width:2px;height:17px;background:repeating-linear-gradient(180deg,#c1c1c1 0 2px,transparent 2px 4px);"></div><div class="a" style="left:751px;top:1466px;width:13px;height:2px;background:repeating-linear-gradient(90deg,#c1c1c1 0 2px,transparent 2px 4px);"></div><svg style="left:766px;top:1457.6px;" width="32" height="28" viewBox="0 0 32 28"><defs><linearGradient id="g14" x1="0" y1="0" x2="1" y2="1"><stop offset="0" stop-color="#8cc3df"/><stop offset=".35" stop-color="#4c9dc8"/><stop offset="1" stop-color="#2c7db0"/></linearGradient></defs>
<path d="M9 5 L11 1.2 H21 L23 5" fill="none" stroke="#2a6a90" stroke-width="2.2" stroke-linejoin="round"/>
<rect x="1" y="4.5" width="30" height="22.5" rx="3.5" fill="url(#g14)" stroke="#256d96" stroke-width="1.6"/>
<path d="M2 24.5 H30" stroke="#1f5f86" stroke-width="2" opacity=".55"/></svg><div class="t" style="left:804.4px;top:1468.2px;font-size:22px;line-height:22px;color:#383838;">Mechanical Change Task</div><div class="a" style="left:1569px;top:1278px;width:1px;height:224px;background:#ececec;"></div><div class="a" style="left:1644px;top:1278px;width:974px;height:964px;overflow:hidden;"><div class="a" style="left:0px;top:0px;width:944px;height:54px;background:#fff;"></div><div class="a" style="left:0px;top:54px;width:944px;height:2px;background:#ededed;"></div><div class="a" style="left:2px;top:0px;width:44px;height:54px;background:linear-gradient(90deg,#fafafa 0,#f6f6f7 30%,#ebecef 60%,#ebecef 94%,#dcdde0 100%);"></div><div class="cb" style="left:8px;top:8px;"></div><div class="a" style="left:66px;top:4px;width:2px;height:36px;background:repeating-linear-gradient(180deg,#c1c1c1 0 2px,transparent 2px 4px);"></div><div class="a" style="left:69px;top:20px;width:12px;height:2px;background:repeating-linear-gradient(90deg,#c1c1c1 0 2px,transparent 2px 4px);"></div><svg style="left:87.6px;top:9.8px;" width="27" height="30" viewBox="0 0 27 30"><defs><linearGradient id="g15" x1="0" y1="0" x2="1" y2="1"><stop offset="0" stop-color="#ffffff"/><stop offset="1" stop-color="#e4e4da"/></linearGradient></defs>
<path d="M1 1 H19 L25.5 7.5 V29 H1 Z" fill="url(#g15)" stroke="#8c8c78" stroke-width="2" stroke-linejoin="round"/>
<path d="M19 1 V7.5 H25.5" fill="#f3f3ea" stroke="#8c8c78" stroke-width="1.4"/>
<path d="M5 17.5 L7.5 19 L9.6 16.5 L11.8 19 L14 17.5 C14.2 21.5 12.4 24.4 9.6 26 C6.8 24.4 4.8 21.5 5 17.5 Z" fill="#f2b320" stroke="#c98a0e" stroke-width="1"/>
<path d="M15.5 25 H21.5" stroke="#9a9a88" stroke-width="2"/></svg><div class="t" style="left:120.3px;top:22.2px;font-size:22px;line-height:22px;color:#383838;">Agreement</div><div class="a" style="left:0px;top:56px;width:944px;height:54px;background:#f7f7f7;"></div><div class="a" style="left:0px;top:110px;width:944px;height:2px;background:#ededed;"></div><div class="a" style="left:2px;top:56px;width:44px;height:54px;background:linear-gradient(90deg,#fafafa 0,#f6f6f7 30%,#ebecef 60%,#ebecef 94%,#dcdde0 100%);"></div><div class="cb" style="left:8px;top:64px;"></div><div class="a" style="left:66px;top:60px;width:2px;height:9px;background:repeating-linear-gradient(180deg,#c1c1c1 0 2px,transparent 2px 4px);"></div><div class="a" style="left:66px;top:87px;width:2px;height:9px;background:repeating-linear-gradient(180deg,#c1c1c1 0 2px,transparent 2px 4px);"></div><svg style="left:58px;top:68.3px;" width="18" height="18" viewBox="0 0 18 18"><defs><linearGradient id="g16" x1="0" y1="0" x2="0" y2="1"><stop offset="0" stop-color="#ffffff"/><stop offset=".45" stop-color="#e4ecfa"/><stop offset="1" stop-color="#a9bee6"/></linearGradient></defs>
<rect x="1" y="1" width="16" height="16" rx="2.5" fill="url(#g16)" stroke="#7f97cc" stroke-width="2"/>
<path d="M1.2 16.4 H16.8 V2" fill="none" stroke="#4a6299" stroke-width="1.5" stroke-linejoin="round"/>
<path d="M4.5 9 H13.5" stroke="#2b3a5c" stroke-width="2.4"/></svg><div class="a" style="left:77px;top:76px;width:4px;height:2px;background:repeating-linear-gradient(90deg,#c1c1c1 0 2px,transparent 2px 4px);"></div><svg style="left:86px;top:64px;" width="28" height="32" viewBox="0 0 28 32"><defs><linearGradient id="g17" x1="0" y1="0" x2="1" y2="1"><stop offset="0" stop-color="#ffffff"/><stop offset=".6" stop-color="#f3f4f7"/><stop offset="1" stop-color="#d9dde6"/></linearGradient>
<linearGradient id="g17b" x1="0" y1="0" x2="1" y2="1"><stop offset="0" stop-color="#9db9df"/><stop offset=".5" stop-color="#4f72a6"/><stop offset="1" stop-color="#14294d"/></linearGradient></defs>
<rect x="1" y="1" width="26" height="30" fill="url(#g17)" stroke="url(#g17b)" stroke-width="2"/><path d="M7 9.5 H22.5" stroke="#8fa6c6" stroke-width="2"/><path d="M7 13.5 H22.5" stroke="#8fa6c6" stroke-width="2"/><path d="M7 17.5 H22.5" stroke="#8fa6c6" stroke-width="2"/><path d="M7 21.5 H22.5" stroke="#8fa6c6" stroke-width="2"/></svg><div class="t" style="left:120.3px;top:78.2px;font-size:22px;line-height:22px;color:#383838;">Documents</div><div class="a" style="left:0px;top:112px;width:944px;height:54px;background:#fff;"></div><div class="a" style="left:0px;top:166px;width:944px;height:2px;background:#ededed;"></div><div class="a" style="left:2px;top:112px;width:44px;height:54px;background:linear-gradient(90deg,#fafafa 0,#f6f6f7 30%,#ebecef 60%,#ebecef 94%,#dcdde0 100%);"></div><div class="cb" style="left:8px;top:120px;"></div><div class="a" style="left:66px;top:116px;width:2px;height:36px;background:repeating-linear-gradient(180deg,#c1c1c1 0 2px,transparent 2px 4px);"></div><div class="a" style="left:98px;top:116px;width:2px;height:36px;background:repeating-linear-gradient(180deg,#c1c1c1 0 2px,transparent 2px 4px);"></div><div class="a" style="left:101px;top:132px;width:12px;height:2px;background:repeating-linear-gradient(90deg,#c1c1c1 0 2px,transparent 2px 4px);"></div><svg style="left:115.8px;top:120.2px;" width="30" height="32" viewBox="0 0 30 32"><defs><linearGradient id="g18" x1="0" y1="0" x2="1" y2="1"><stop offset="0" stop-color="#ffffff"/><stop offset=".6" stop-color="#f3f4f7"/><stop offset="1" stop-color="#d9dde6"/></linearGradient>
<linearGradient id="g18b" x1="0" y1="0" x2="1" y2="1"><stop offset="0" stop-color="#9db9df"/><stop offset=".5" stop-color="#4f72a6"/><stop offset="1" stop-color="#14294d"/></linearGradient></defs>
<rect x="1" y="1" width="28" height="30" fill="url(#g18)" stroke="url(#g18b)" stroke-width="2"/><rect x="5" y="5" width="21" height="3.4" fill="#5f97de"/><rect x="5" y="24" width="21" height="3.6" fill="#5f97de"/>
<rect x="8" y="11" width="4" height="3.2" fill="#4d80cc"/><rect x="8" y="17.6" width="4" height="3.2" fill="#4d80cc"/>
<path d="M14.5 12.6 H25 M14.5 19.2 H25" stroke="#4d80cc" stroke-width="2"/></svg><div class="t" style="left:152.3px;top:134.2px;font-size:22px;line-height:22px;color:#383838;">Agenda</div><div class="a" style="left:0px;top:168px;width:944px;height:54px;background:#f7f7f7;"></div><div class="a" style="left:0px;top:222px;width:944px;height:2px;background:#ededed;"></div><div class="a" style="left:2px;top:168px;width:44px;height:54px;background:linear-gradient(90deg,#fafafa 0,#f6f6f7 30%,#ebecef 60%,#ebecef 94%,#dcdde0 100%);"></div><div class="cb" style="left:8px;top:176px;"></div><div class="a" style="left:66px;top:172px;width:2px;height:36px;background:repeating-linear-gradient(180deg,#c1c1c1 0 2px,transparent 2px 4px);"></div><div class="a" style="left:98px;top:172px;width:2px;height:36px;background:repeating-linear-gradient(180deg,#c1c1c1 0 2px,transparent 2px 4px);"></div><div class="a" style="left:101px;top:188px;width:12px;height:2px;background:repeating-linear-gradient(90deg,#c1c1c1 0 2px,transparent 2px 4px);"></div><svg style="left:116px;top:176px;" width="30" height="32" viewBox="0 0 30 32"><defs><linearGradient id="g19" x1="0" y1="0" x2="1" y2="1"><stop offset="0" stop-color="#ffffff"/><stop offset="1" stop-color="#dfe3ea"/></linearGradient>
<linearGradient id="g19b" x1="0" y1="0" x2="1" y2="1"><stop offset="0" stop-color="#9db9df"/><stop offset=".5" stop-color="#4f72a6"/><stop offset="1" stop-color="#14294d"/></linearGradient></defs>
<rect x="1" y="3" width="26" height="28" fill="url(#g19)" stroke="url(#g19b)" stroke-width="2"/>
<path d="M6 10 H12 M6 14 H12 M6 18 H17 M6 22 H17 M6 26 H17" stroke="#8fa6c6" stroke-width="2"/>
<rect x="13" y="1" width="16" height="16" fill="#fbe9a4" stroke="#d79a1d" stroke-width="2"/>
<path d="M16.5 5.5 H25.5" stroke="#d9a530" stroke-width="2"/><path d="M16.5 9.5 H25.5" stroke="#4a5a78" stroke-width="2"/>
<path d="M21 11 V23 H12" stroke="#3a4a6a" stroke-width="2" fill="none"/></svg><div class="t" style="left:152.3px;top:190.2px;font-size:22px;line-height:22px;color:#383838;">Reference Document</div><div class="a" style="left:0px;top:224px;width:944px;height:54px;background:#fff;"></div><div class="a" style="left:0px;top:278px;width:944px;height:2px;background:#ededed;"></div><div class="a" style="left:2px;top:224px;width:44px;height:54px;background:linear-gradient(90deg,#fafafa 0,#f6f6f7 30%,#ebecef 60%,#ebecef 94%,#dcdde0 100%);"></div><div class="cb" style="left:8px;top:232px;"></div><div class="a" style="left:66px;top:228px;width:2px;height:36px;background:repeating-linear-gradient(180deg,#c1c1c1 0 2px,transparent 2px 4px);"></div><div class="a" style="left:98px;top:228px;width:2px;height:36px;background:repeating-linear-gradient(180deg,#c1c1c1 0 2px,transparent 2px 4px);"></div><div class="a" style="left:101px;top:244px;width:12px;height:2px;background:repeating-linear-gradient(90deg,#c1c1c1 0 2px,transparent 2px 4px);"></div><svg style="left:117.8px;top:232px;" width="28" height="32" viewBox="0 0 28 32"><defs><linearGradient id="g20" x1="0" y1="0" x2="1" y2="1"><stop offset="0" stop-color="#ffffff"/><stop offset=".6" stop-color="#f3f4f7"/><stop offset="1" stop-color="#d9dde6"/></linearGradient>
<linearGradient id="g20b" x1="0" y1="0" x2="1" y2="1"><stop offset="0" stop-color="#9db9df"/><stop offset=".5" stop-color="#4f72a6"/><stop offset="1" stop-color="#14294d"/></linearGradient></defs>
<rect x="1" y="1" width="26" height="30" fill="url(#g20)" stroke="url(#g20b)" stroke-width="2"/><path d="M7 9.5 H22.5" stroke="#8fa6c6" stroke-width="2"/><path d="M7 13.5 H22.5" stroke="#8fa6c6" stroke-width="2"/><path d="M7 17.5 H22.5" stroke="#8fa6c6" stroke-width="2"/><path d="M7 21.5 H22.5" stroke="#8fa6c6" stroke-width="2"/></svg><div class="t" style="left:152.3px;top:246.2px;font-size:22px;line-height:22px;color:#383838;">ECAD Data</div><div class="a" style="left:0px;top:280px;width:946px;height:56px;background:#dff1d8;"></div><div class="cb" style="left:8px;top:288px;"></div><svg style="left:8px;top:288px;" width="26" height="26" viewBox="0 0 26 26"><path d="M6 12.5 L11.5 20 L20.5 6.5" fill="none" stroke="#585858" stroke-width="3.4" stroke-linejoin="miter"/></svg><div class="a" style="left:66px;top:284px;width:2px;height:36px;background:repeating-linear-gradient(180deg,#c1c1c1 0 2px,transparent 2px 4px);"></div><div class="a" style="left:98px;top:284px;width:2px;height:36px;background:repeating-linear-gradient(180deg,#c1c1c1 0 2px,transparent 2px 4px);"></div><div class="a" style="left:101px;top:300px;width:12px;height:2px;background:repeating-linear-gradient(90deg,#c1c1c1 0 2px,transparent 2px 4px);"></div><svg style="left:117.8px;top:290px;" width="26" height="30" viewBox="0 0 26 30"><rect x="1" y="1" width="24" height="28" fill="#ffffff" stroke="#7f7f6c" stroke-width="2"/>
<path d="M1 29 V1 H25" fill="none" stroke="#8ea4c8" stroke-width="2"/>
<path d="M6.5 8.5 H20" stroke="#a3a58f" stroke-width="2.6"/></svg><div class="t" style="left:152.3px;top:302.2px;font-size:22px;line-height:22px;color:#383838;">General</div><div class="a" style="left:0px;top:336px;width:944px;height:54px;background:#fff;"></div><div class="a" style="left:0px;top:390px;width:944px;height:2px;background:#ededed;"></div><div class="a" style="left:2px;top:336px;width:44px;height:54px;background:linear-gradient(90deg,#fafafa 0,#f6f6f7 30%,#ebecef 60%,#ebecef 94%,#dcdde0 100%);"></div><div class="cb" style="left:8px;top:344px;"></div><div class="a" style="left:66px;top:340px;width:2px;height:36px;background:repeating-linear-gradient(180deg,#c1c1c1 0 2px,transparent 2px 4px);"></div><div class="a" style="left:98px;top:340px;width:2px;height:36px;background:repeating-linear-gradient(180deg,#c1c1c1 0 2px,transparent 2px 4px);"></div><div class="a" style="left:101px;top:356px;width:12px;height:2px;background:repeating-linear-gradient(90deg,#c1c1c1 0 2px,transparent 2px 4px);"></div><svg style="left:117.8px;top:344px;" width="28" height="32" viewBox="0 0 28 32"><defs><linearGradient id="g21" x1="0" y1="0" x2="1" y2="1"><stop offset="0" stop-color="#ffffff"/><stop offset=".6" stop-color="#f3f4f7"/><stop offset="1" stop-color="#d9dde6"/></linearGradient>
<linearGradient id="g21b" x1="0" y1="0" x2="1" y2="1"><stop offset="0" stop-color="#9db9df"/><stop offset=".5" stop-color="#4f72a6"/><stop offset="1" stop-color="#14294d"/></linearGradient></defs>
<rect x="1" y="1" width="26" height="30" fill="url(#g21)" stroke="url(#g21b)" stroke-width="2"/><path d="M7 9.5 H22.5" stroke="#8fa6c6" stroke-width="2"/><path d="M7 13.5 H22.5" stroke="#8fa6c6" stroke-width="2"/><path d="M7 17.5 H22.5" stroke="#8fa6c6" stroke-width="2"/><path d="M7 21.5 H22.5" stroke="#8fa6c6" stroke-width="2"/></svg><div class="t" style="left:152.3px;top:358.2px;font-size:22px;line-height:22px;color:#383838;">Customizing Academy</div><div class="a" style="left:0px;top:392px;width:944px;height:54px;background:#f7f7f7;"></div><div class="a" style="left:0px;top:446px;width:944px;height:2px;background:#ededed;"></div><div class="a" style="left:2px;top:392px;width:44px;height:54px;background:linear-gradient(90deg,#fafafa 0,#f6f6f7 30%,#ebecef 60%,#ebecef 94%,#dcdde0 100%);"></div><div class="cb" style="left:8px;top:400px;"></div><div class="a" style="left:66px;top:396px;width:2px;height:36px;background:repeating-linear-gradient(180deg,#c1c1c1 0 2px,transparent 2px 4px);"></div><div class="a" style="left:98px;top:396px;width:2px;height:9px;background:repeating-linear-gradient(180deg,#c1c1c1 0 2px,transparent 2px 4px);"></div><div class="a" style="left:98px;top:423px;width:2px;height:9px;background:repeating-linear-gradient(180deg,#c1c1c1 0 2px,transparent 2px 4px);"></div><svg style="left:90px;top:404.3px;" width="18" height="18" viewBox="0 0 18 18"><defs><linearGradient id="g22" x1="0" y1="0" x2="0" y2="1"><stop offset="0" stop-color="#ffffff"/><stop offset=".45" stop-color="#e4ecfa"/><stop offset="1" stop-color="#a9bee6"/></linearGradient></defs>
<rect x="1" y="1" width="16" height="16" rx="2.5" fill="url(#g22)" stroke="#7f97cc" stroke-width="2"/>
<path d="M1.2 16.4 H16.8 V2" fill="none" stroke="#4a6299" stroke-width="1.5" stroke-linejoin="round"/>
<path d="M4.5 9 H13.5" stroke="#2b3a5c" stroke-width="2.4"/><path d="M9 4.5 V13.5" stroke="#2b3a5c" stroke-width="2.4"/></svg><div class="a" style="left:109px;top:412px;width:4px;height:2px;background:repeating-linear-gradient(90deg,#c1c1c1 0 2px,transparent 2px 4px);"></div><svg style="left:113.6px;top:399.6px;" width="33" height="33" viewBox="0 0 33 33"><rect x="14.6" y="1" width="16.6" height="17" fill="#b9f4f6" stroke="#8a9aa0" stroke-width="1.6"/>
<rect x="1" y="14.5" width="17" height="17" fill="#f7eeb6" stroke="#c2a052" stroke-width="1.6"/>
<path d="M1 31.5 H18 V14.5" fill="none" stroke="#b07a2a" stroke-width="1.6"/>
<circle cx="16.5" cy="16.5" r="9" fill="rgba(255,255,255,.25)" stroke="#9a9a9e" stroke-width="2"/>
<rect x="13" y="13" width="7.5" height="7.5" fill="#ff4a5a"/><rect x="15.4" y="15.4" width="2.6" height="2.6" fill="#ff9aa2"/></svg><div class="t" style="left:152.3px;top:414.2px;font-size:22px;line-height:22px;color:#383838;">Interference Detection Definition</div><div class="a" style="left:0px;top:448px;width:946px;height:56px;background:#fef0df;"></div><div class="a" style="left:2px;top:450px;width:44px;height:52px;background:linear-gradient(90deg,#f9f9f9 0,#f6f6f7 30%,#ebecef 60%,#ebecef 94%,#dcdde0 100%);"></div><div class="cb" style="left:8px;top:456px;"></div><div class="a" style="left:66px;top:452px;width:2px;height:36px;background:repeating-linear-gradient(180deg,#c1c1c1 0 2px,transparent 2px 4px);"></div><div class="a" style="left:98px;top:452px;width:2px;height:36px;background:repeating-linear-gradient(180deg,#c1c1c1 0 2px,transparent 2px 4px);"></div><div class="a" style="left:101px;top:468px;width:12px;height:2px;background:repeating-linear-gradient(90deg,#c1c1c1 0 2px,transparent 2px 4px);"></div><svg style="left:115.8px;top:456.2px;" width="30" height="32" viewBox="0 0 30 32"><defs><linearGradient id="g23" x1="0" y1="0" x2="1" y2="1"><stop offset="0" stop-color="#ffffff"/><stop offset=".6" stop-color="#f3f4f7"/><stop offset="1" stop-color="#d9dde6"/></linearGradient>
<linearGradient id="g23b" x1="0" y1="0" x2="1" y2="1"><stop offset="0" stop-color="#9db9df"/><stop offset=".5" stop-color="#4f72a6"/><stop offset="1" stop-color="#14294d"/></linearGradient></defs>
<rect x="1" y="1" width="28" height="30" fill="url(#g23)" stroke="url(#g23b)" stroke-width="2"/><path d="M5.5 5 V11 M5.5 13 V19 M5.5 21 V27" stroke="#3f66a0" stroke-width="2"/>
<path d="M8.5 9.5 H10.5 M8.5 17.5 H10.5 M8.5 25.5 H10.5" stroke="#3f66a0" stroke-width="2"/>
<path d="M14 9.5 H25 M14 17.5 H25 M14 25.5 H25" stroke="#4f78b4" stroke-width="2"/></svg><div class="t" style="left:152.3px;top:470.2px;font-size:22px;line-height:22px;color:#383838;">Minutes</div><div class="a" style="left:0px;top:504px;width:944px;height:54px;background:#f7f7f7;"></div><div class="a" style="left:0px;top:558px;width:944px;height:2px;background:#ededed;"></div><div class="a" style="left:2px;top:504px;width:44px;height:54px;background:linear-gradient(90deg,#fafafa 0,#f6f6f7 30%,#ebecef 60%,#ebecef 94%,#dcdde0 100%);"></div><div class="cb" style="left:8px;top:512px;"></div><div class="a" style="left:66px;top:508px;width:2px;height:36px;background:repeating-linear-gradient(180deg,#c1c1c1 0 2px,transparent 2px 4px);"></div><div class="a" style="left:98px;top:508px;width:2px;height:36px;background:repeating-linear-gradient(180deg,#c1c1c1 0 2px,transparent 2px 4px);"></div><div class="a" style="left:101px;top:524px;width:12px;height:2px;background:repeating-linear-gradient(90deg,#c1c1c1 0 2px,transparent 2px 4px);"></div><svg style="left:115.8px;top:512.2px;" width="30" height="32" viewBox="0 0 30 32"><defs><linearGradient id="g24" x1="0" y1="0" x2="1" y2="1"><stop offset="0" stop-color="#ffffff"/><stop offset=".6" stop-color="#f3f4f7"/><stop offset="1" stop-color="#d9dde6"/></linearGradient>
<linearGradient id="g24b" x1="0" y1="0" x2="1" y2="1"><stop offset="0" stop-color="#9db9df"/><stop offset=".5" stop-color="#4f72a6"/><stop offset="1" stop-color="#14294d"/></linearGradient></defs>
<rect x="1" y="1" width="28" height="30" fill="url(#g24)" stroke="url(#g24b)" stroke-width="2"/><rect x="5" y="5" width="21" height="3" fill="#5f97de"/>
<rect x="6" y="11" width="19" height="16" fill="#fdf7d4" stroke="#a9b6c9" stroke-width="1"/>
<rect x="7" y="12" width="10" height="3.4" fill="#b8862c"/>
<rect x="12" y="21" width="2.6" height="5.5" fill="#e04a2c"/><rect x="16.2" y="18.5" width="2.6" height="8" fill="#3d6fd0"/><rect x="20.4" y="14" width="2.8" height="12.5" fill="#2fa85a"/></svg><div class="t" style="left:152.3px;top:526.2px;font-size:22px;line-height:22px;color:#383838;">Presentation</div><div class="a" style="left:0px;top:560px;width:944px;height:54px;background:#fff;"></div><div class="a" style="left:0px;top:614px;width:944px;height:2px;background:#ededed;"></div><div class="a" style="left:2px;top:560px;width:44px;height:54px;background:linear-gradient(90deg,#fafafa 0,#f6f6f7 30%,#ebecef 60%,#ebecef 94%,#dcdde0 100%);"></div><div class="cb" style="left:8px;top:568px;"></div><div class="a" style="left:66px;top:564px;width:2px;height:36px;background:repeating-linear-gradient(180deg,#c1c1c1 0 2px,transparent 2px 4px);"></div><div class="a" style="left:98px;top:564px;width:2px;height:36px;background:repeating-linear-gradient(180deg,#c1c1c1 0 2px,transparent 2px 4px);"></div><div class="a" style="left:101px;top:580px;width:12px;height:2px;background:repeating-linear-gradient(90deg,#c1c1c1 0 2px,transparent 2px 4px);"></div><svg style="left:117.8px;top:568px;" width="28" height="32" viewBox="0 0 28 32"><defs><linearGradient id="g25" x1="0" y1="0" x2="1" y2="1"><stop offset="0" stop-color="#ffffff"/><stop offset=".6" stop-color="#f3f4f7"/><stop offset="1" stop-color="#d9dde6"/></linearGradient>
<linearGradient id="g25b" x1="0" y1="0" x2="1" y2="1"><stop offset="0" stop-color="#9db9df"/><stop offset=".5" stop-color="#4f72a6"/><stop offset="1" stop-color="#14294d"/></linearGradient></defs>
<rect x="1" y="1" width="26" height="30" fill="url(#g25)" stroke="url(#g25b)" stroke-width="2"/><path d="M7 9.5 H22.5" stroke="#8fa6c6" stroke-width="2"/><path d="M7 13.5 H22.5" stroke="#8fa6c6" stroke-width="2"/><path d="M7 17.5 H22.5" stroke="#8fa6c6" stroke-width="2"/><path d="M7 21.5 H22.5" stroke="#8fa6c6" stroke-width="2"/></svg><div class="t" style="left:152.3px;top:582.2px;font-size:22px;line-height:22px;color:#383838;">Translation Document</div><div class="a" style="left:0px;top:616px;width:944px;height:54px;background:#f7f7f7;"></div><div class="a" style="left:0px;top:670px;width:944px;height:2px;background:#ededed;"></div><div class="a" style="left:2px;top:616px;width:44px;height:54px;background:linear-gradient(90deg,#fafafa 0,#f6f6f7 30%,#ebecef 60%,#ebecef 94%,#dcdde0 100%);"></div><div class="cb" style="left:8px;top:624px;"></div><div class="a" style="left:66px;top:620px;width:2px;height:36px;background:repeating-linear-gradient(180deg,#c1c1c1 0 2px,transparent 2px 4px);"></div><div class="a" style="left:98px;top:620px;width:2px;height:36px;background:repeating-linear-gradient(180deg,#c1c1c1 0 2px,transparent 2px 4px);"></div><div class="a" style="left:101px;top:636px;width:12px;height:2px;background:repeating-linear-gradient(90deg,#c1c1c1 0 2px,transparent 2px 4px);"></div><svg style="left:115.8px;top:624.2px;" width="30" height="32" viewBox="0 0 30 32"><defs><linearGradient id="g26" x1="0" y1="0" x2="1" y2="1"><stop offset="0" stop-color="#ffffff"/><stop offset=".6" stop-color="#f3f4f7"/><stop offset="1" stop-color="#d9dde6"/></linearGradient>
<linearGradient id="g26b" x1="0" y1="0" x2="1" y2="1"><stop offset="0" stop-color="#9db9df"/><stop offset=".5" stop-color="#4f72a6"/><stop offset="1" stop-color="#14294d"/></linearGradient></defs>
<rect x="1" y="1" width="28" height="30" fill="url(#g26)" stroke="url(#g26b)" stroke-width="2"/><path d="M5.5 5 V11 M14 12.5 V18.5 M22.5 20 V26" stroke="#3f66a0" stroke-width="2"/>
<path d="M8.5 9.5 H10.5 M17 17 H19 M25 25 H27" stroke="#3f66a0" stroke-width="1.8"/>
<path d="M14 9 H25 M20.5 16.5 H26" stroke="#4f78b4" stroke-width="2"/>
<path d="M6 13.5 V16.5 H8.5 M14.5 21 V24 H17" stroke="#8fa6c6" stroke-width="1.5" fill="none"/></svg><div class="t" style="left:152.3px;top:638.2px;font-size:22px;line-height:22px;color:#383838;">Plan</div><div class="a" style="left:0px;top:672px;width:944px;height:54px;background:#fff;"></div><div class="a" style="left:0px;top:726px;width:944px;height:2px;background:#ededed;"></div><div class="a" style="left:2px;top:672px;width:44px;height:54px;background:linear-gradient(90deg,#fafafa 0,#f6f6f7 30%,#ebecef 60%,#ebecef 94%,#dcdde0 100%);"></div><div class="cb" style="left:8px;top:680px;"></div><div class="a" style="left:66px;top:676px;width:2px;height:36px;background:repeating-linear-gradient(180deg,#c1c1c1 0 2px,transparent 2px 4px);"></div><div class="a" style="left:98px;top:676px;width:2px;height:17px;background:repeating-linear-gradient(180deg,#c1c1c1 0 2px,transparent 2px 4px);"></div><div class="a" style="left:101px;top:692px;width:12px;height:2px;background:repeating-linear-gradient(90deg,#c1c1c1 0 2px,transparent 2px 4px);"></div><svg style="left:117.8px;top:680px;" width="28" height="32" viewBox="0 0 28 32"><defs><linearGradient id="g27" x1="0" y1="0" x2="1" y2="1"><stop offset="0" stop-color="#ffffff"/><stop offset=".6" stop-color="#f3f4f7"/><stop offset="1" stop-color="#d9dde6"/></linearGradient>
<linearGradient id="g27b" x1="0" y1="0" x2="1" y2="1"><stop offset="0" stop-color="#9db9df"/><stop offset=".5" stop-color="#4f72a6"/><stop offset="1" stop-color="#14294d"/></linearGradient></defs>
<rect x="1" y="1" width="26" height="30" fill="url(#g27)" stroke="url(#g27b)" stroke-width="2"/><path d="M7 9.5 H22.5" stroke="#8fa6c6" stroke-width="2"/><path d="M7 13.5 H22.5" stroke="#8fa6c6" stroke-width="2"/><path d="M7 17.5 H22.5" stroke="#8fa6c6" stroke-width="2"/><path d="M7 21.5 H22.5" stroke="#8fa6c6" stroke-width="2"/></svg><div class="t" style="left:152.3px;top:694.2px;font-size:22px;line-height:22px;color:#383838;">Document</div><div class="a" style="left:0px;top:728px;width:944px;height:54px;background:#f7f7f7;"></div><div class="a" style="left:0px;top:782px;width:944px;height:2px;background:#ededed;"></div><div class="a" style="left:2px;top:728px;width:44px;height:54px;background:linear-gradient(90deg,#fafafa 0,#f6f6f7 30%,#ebecef 60%,#ebecef 94%,#dcdde0 100%);"></div><div class="cb" style="left:8px;top:736px;"></div><div class="a" style="left:66px;top:732px;width:2px;height:9px;background:repeating-linear-gradient(180deg,#c1c1c1 0 2px,transparent 2px 4px);"></div><div class="a" style="left:66px;top:759px;width:2px;height:9px;background:repeating-linear-gradient(180deg,#c1c1c1 0 2px,transparent 2px 4px);"></div><svg style="left:58px;top:740.3px;" width="18" height="18" viewBox="0 0 18 18"><defs><linearGradient id="g28" x1="0" y1="0" x2="0" y2="1"><stop offset="0" stop-color="#ffffff"/><stop offset=".45" stop-color="#e4ecfa"/><stop offset="1" stop-color="#a9bee6"/></linearGradient></defs>
<rect x="1" y="1" width="16" height="16" rx="2.5" fill="url(#g28)" stroke="#7f97cc" stroke-width="2"/>
<path d="M1.2 16.4 H16.8 V2" fill="none" stroke="#4a6299" stroke-width="1.5" stroke-linejoin="round"/>
<path d="M4.5 9 H13.5" stroke="#2b3a5c" stroke-width="2.4"/></svg><div class="a" style="left:77px;top:748px;width:4px;height:2px;background:repeating-linear-gradient(90deg,#c1c1c1 0 2px,transparent 2px 4px);"></div><svg style="left:81.1px;top:734.4px;" width="32" height="32" viewBox="0 0 32 32"><path d="M2 2 V30.4 H30.8 Z" fill="#ff9a0c" stroke="#3a2508" stroke-width="2" stroke-linejoin="round"/>
<path d="M1 30.8 H32" stroke="#1e1408" stroke-width="2.4"/>
<path d="M8 16.5 V24 H15.8 Z" fill="#efe6da" stroke="#6a4a1a" stroke-width="1.6" stroke-linejoin="round"/></svg><div class="t" style="left:120.3px;top:750.2px;font-size:22px;line-height:22px;color:#383838;">EPM Document</div><div class="a" style="left:0px;top:784px;width:944px;height:54px;background:#fff;"></div><div class="a" style="left:0px;top:838px;width:944px;height:2px;background:#ededed;"></div><div class="a" style="left:2px;top:784px;width:44px;height:54px;background:linear-gradient(90deg,#fafafa 0,#f6f6f7 30%,#ebecef 60%,#ebecef 94%,#dcdde0 100%);"></div><div class="cb" style="left:8px;top:792px;"></div><div class="a" style="left:66px;top:788px;width:2px;height:36px;background:repeating-linear-gradient(180deg,#c1c1c1 0 2px,transparent 2px 4px);"></div><div class="a" style="left:98px;top:788px;width:2px;height:9px;background:repeating-linear-gradient(180deg,#c1c1c1 0 2px,transparent 2px 4px);"></div><div class="a" style="left:98px;top:815px;width:2px;height:9px;background:repeating-linear-gradient(180deg,#c1c1c1 0 2px,transparent 2px 4px);"></div><svg style="left:90px;top:796.3px;" width="18" height="18" viewBox="0 0 18 18"><defs><linearGradient id="g29" x1="0" y1="0" x2="0" y2="1"><stop offset="0" stop-color="#ffffff"/><stop offset=".45" stop-color="#e4ecfa"/><stop offset="1" stop-color="#a9bee6"/></linearGradient></defs>
<rect x="1" y="1" width="16" height="16" rx="2.5" fill="url(#g29)" stroke="#7f97cc" stroke-width="2"/>
<path d="M1.2 16.4 H16.8 V2" fill="none" stroke="#4a6299" stroke-width="1.5" stroke-linejoin="round"/>
<path d="M4.5 9 H13.5" stroke="#2b3a5c" stroke-width="2.4"/><path d="M9 4.5 V13.5" stroke="#2b3a5c" stroke-width="2.4"/></svg><div class="a" style="left:109px;top:804px;width:4px;height:2px;background:repeating-linear-gradient(90deg,#c1c1c1 0 2px,transparent 2px 4px);"></div><svg style="left:113.1px;top:790.4px;" width="32" height="32" viewBox="0 0 32 32"><path d="M2 2 V30.4 H30.8 Z" fill="#ff9a0c" stroke="#3a2508" stroke-width="2" stroke-linejoin="round"/>
<path d="M1 30.8 H32" stroke="#1e1408" stroke-width="2.4"/>
<path d="M8 16.5 V24 H15.8 Z" fill="#efe6da" stroke="#6a4a1a" stroke-width="1.6" stroke-linejoin="round"/></svg><div class="t" style="left:152.3px;top:806.2px;font-size:22px;line-height:22px;color:#383838;">Dynamic Document</div><div class="a" style="left:0px;top:840px;width:944px;height:54px;background:#f7f7f7;"></div><div class="a" style="left:0px;top:894px;width:944px;height:2px;background:#ededed;"></div><div class="a" style="left:2px;top:840px;width:44px;height:54px;background:linear-gradient(90deg,#fafafa 0,#f6f6f7 30%,#ebecef 60%,#ebecef 94%,#dcdde0 100%);"></div><div class="cb" style="left:8px;top:848px;"></div><div class="a" style="left:66px;top:844px;width:2px;height:36px;background:repeating-linear-gradient(180deg,#c1c1c1 0 2px,transparent 2px 4px);"></div><div class="a" style="left:98px;top:844px;width:2px;height:9px;background:repeating-linear-gradient(180deg,#c1c1c1 0 2px,transparent 2px 4px);"></div><svg style="left:90px;top:852.3px;" width="18" height="18" viewBox="0 0 18 18"><defs><linearGradient id="g30" x1="0" y1="0" x2="0" y2="1"><stop offset="0" stop-color="#ffffff"/><stop offset=".45" stop-color="#e4ecfa"/><stop offset="1" stop-color="#a9bee6"/></linearGradient></defs>
<rect x="1" y="1" width="16" height="16" rx="2.5" fill="url(#g30)" stroke="#7f97cc" stroke-width="2"/>
<path d="M1.2 16.4 H16.8 V2" fill="none" stroke="#4a6299" stroke-width="1.5" stroke-linejoin="round"/>
<path d="M4.5 9 H13.5" stroke="#2b3a5c" stroke-width="2.4"/><path d="M9 4.5 V13.5" stroke="#2b3a5c" stroke-width="2.4"/></svg><div class="a" style="left:109px;top:860px;width:4px;height:2px;background:repeating-linear-gradient(90deg,#c1c1c1 0 2px,transparent 2px 4px);"></div><svg style="left:113.1px;top:846.4px;" width="32" height="32" viewBox="0 0 32 32"><path d="M2 2 V30.4 H30.8 Z" fill="#ff9a0c" stroke="#3a2508" stroke-width="2" stroke-linejoin="round"/>
<path d="M1 30.8 H32" stroke="#1e1408" stroke-width="2.4"/>
<path d="M8 16.5 V24 H15.8 Z" fill="#efe6da" stroke="#6a4a1a" stroke-width="1.6" stroke-linejoin="round"/></svg><div class="t" style="left:152.3px;top:862.2px;font-size:22px;line-height:22px;color:#383838;">CAD Document</div><div class="a" style="left:0px;top:896px;width:946px;height:56px;background:#dff1d8;"></div><div class="cb" style="left:8px;top:904px;"></div><svg style="left:8px;top:904px;" width="26" height="26" viewBox="0 0 26 26"><path d="M6 12.5 L11.5 20 L20.5 6.5" fill="none" stroke="#585858" stroke-width="3.4" stroke-linejoin="miter"/></svg><div class="a" style="left:66px;top:900px;width:2px;height:9px;background:repeating-linear-gradient(180deg,#c1c1c1 0 2px,transparent 2px 4px);"></div><div class="a" style="left:66px;top:927px;width:2px;height:9px;background:repeating-linear-gradient(180deg,#c1c1c1 0 2px,transparent 2px 4px);"></div><svg style="left:58px;top:908.3px;" width="18" height="18" viewBox="0 0 18 18"><defs><linearGradient id="g31" x1="0" y1="0" x2="0" y2="1"><stop offset="0" stop-color="#ffffff"/><stop offset=".45" stop-color="#e4ecfa"/><stop offset="1" stop-color="#a9bee6"/></linearGradient></defs>
<rect x="1" y="1" width="16" height="16" rx="2.5" fill="url(#g31)" stroke="#7f97cc" stroke-width="2"/>
<path d="M1.2 16.4 H16.8 V2" fill="none" stroke="#4a6299" stroke-width="1.5" stroke-linejoin="round"/>
<path d="M4.5 9 H13.5" stroke="#2b3a5c" stroke-width="2.4"/></svg><div class="a" style="left:77px;top:916px;width:4px;height:2px;background:repeating-linear-gradient(90deg,#c1c1c1 0 2px,transparent 2px 4px);"></div><svg style="left:84px;top:904.4px;" width="30" height="30" viewBox="0 0 30 30"><defs><linearGradient id="g32" x1="0" y1="0" x2="1" y2="1"><stop offset="0" stop-color="#e8e8de"/><stop offset="1" stop-color="#b2b2a2"/></linearGradient></defs>
<path d="M29.1 12.3 L29.1 17.7 L24.9 17.5 L23.8 20.2 L26.9 23.1 L23.1 26.9 L20.2 23.8 L17.5 24.9 L17.7 29.1 L12.3 29.1 L12.5 24.9 L9.8 23.8 L6.9 26.9 L3.1 23.1 L6.2 20.2 L5.1 17.5 L0.9 17.7 L0.9 12.3 L5.1 12.5 L6.2 9.8 L3.1 6.9 L6.9 3.1 L9.8 6.2 L12.5 5.1 L12.3 0.9 L17.7 0.9 L17.5 5.1 L20.2 6.2 L23.1 3.1 L26.9 6.9 L23.8 9.8 L24.9 12.5 Z" fill="url(#g32)" stroke="#3e3e38" stroke-width="2.2" stroke-linejoin="round" stroke-dasharray="3 .8"/>
<path d="M29.1 12.3 L29.1 17.7 L24.9 17.5 L23.8 20.2 L26.9 23.1 L23.1 26.9 L20.2 23.8 L17.5 24.9 L17.7 29.1 L12.3 29.1 L12.5 24.9 L9.8 23.8 L6.9 26.9 L3.1 23.1 L6.2 20.2 L5.1 17.5 L0.9 17.7 L0.9 12.3 L5.1 12.5 L6.2 9.8 L3.1 6.9 L6.9 3.1 L9.8 6.2 L12.5 5.1 L12.3 0.9 L17.7 0.9 L17.5 5.1 L20.2 6.2 L23.1 3.1 L26.9 6.9 L23.8 9.8 L24.9 12.5 Z" fill="url(#g32)" stroke="none" transform="translate(15 15) scale(.9) translate(-15 -15)"/>
<rect x="11.2" y="11.2" width="7.6" height="7.6" rx="1" fill="#ffffff" stroke="#77776a" stroke-width="2"/></svg><div class="t" style="left:120.3px;top:918.2px;font-size:22px;line-height:22px;color:#383838;">Parts</div><div class="a" style="left:0px;top:952px;width:944px;height:54px;background:#f7f7f7;"></div><div class="a" style="left:0px;top:1006px;width:944px;height:2px;background:#ededed;"></div><div class="a" style="left:2px;top:952px;width:44px;height:54px;background:linear-gradient(90deg,#fafafa 0,#f6f6f7 30%,#ebecef 60%,#ebecef 94%,#dcdde0 100%);"></div><div class="cb" style="left:8px;top:960px;"></div><div class="a" style="left:66px;top:956px;width:2px;height:36px;background:repeating-linear-gradient(180deg,#c1c1c1 0 2px,transparent 2px 4px);"></div><div class="a" style="left:98px;top:956px;width:2px;height:36px;background:repeating-linear-gradient(180deg,#c1c1c1 0 2px,transparent 2px 4px);"></div><div class="a" style="left:101px;top:972px;width:12px;height:2px;background:repeating-linear-gradient(90deg,#c1c1c1 0 2px,transparent 2px 4px);"></div><svg style="left:116px;top:960.4px;" width="30" height="30" viewBox="0 0 30 30"><defs><linearGradient id="g33" x1="0" y1="0" x2="1" y2="1"><stop offset="0" stop-color="#e8e8de"/><stop offset="1" stop-color="#b2b2a2"/></linearGradient></defs>
<path d="M29.1 12.3 L29.1 17.7 L24.9 17.5 L23.8 20.2 L26.9 23.1 L23.1 26.9 L20.2 23.8 L17.5 24.9 L17.7 29.1 L12.3 29.1 L12.5 24.9 L9.8 23.8 L6.9 26.9 L3.1 23.1 L6.2 20.2 L5.1 17.5 L0.9 17.7 L0.9 12.3 L5.1 12.5 L6.2 9.8 L3.1 6.9 L6.9 3.1 L9.8 6.2 L12.5 5.1 L12.3 0.9 L17.7 0.9 L17.5 5.1 L20.2 6.2 L23.1 3.1 L26.9 6.9 L23.8 9.8 L24.9 12.5 Z" fill="url(#g33)" stroke="#3e3e38" stroke-width="2.2" stroke-linejoin="round" stroke-dasharray="3 .8"/>
<path d="M29.1 12.3 L29.1 17.7 L24.9 17.5 L23.8 20.2 L26.9 23.1 L23.1 26.9 L20.2 23.8 L17.5 24.9 L17.7 29.1 L12.3 29.1 L12.5 24.9 L9.8 23.8 L6.9 26.9 L3.1 23.1 L6.2 20.2 L5.1 17.5 L0.9 17.7 L0.9 12.3 L5.1 12.5 L6.2 9.8 L3.1 6.9 L6.9 3.1 L9.8 6.2 L12.5 5.1 L12.3 0.9 L17.7 0.9 L17.5 5.1 L20.2 6.2 L23.1 3.1 L26.9 6.9 L23.8 9.8 L24.9 12.5 Z" fill="url(#g33)" stroke="none" transform="translate(15 15) scale(.9) translate(-15 -15)"/>
<rect x="11.2" y="11.2" width="7.6" height="7.6" rx="1" fill="#ffffff" stroke="#77776a" stroke-width="2"/></svg><div class="t" style="left:152.3px;top:974.2px;font-size:22px;line-height:22px;color:#383838;"></div><div class="a" style="left:946px;top:0px;width:28px;height:964px;background:#f9f9f9;border-left:2px solid #ebebeb;"></div><div class="a" style="left:952px;top:7px;width:16px;height:245px;background:#c2c2c2;border-radius:8px;"></div></div><div class="a" style="left:2228px;top:2352px;width:150px;height:34px;border:1px solid #bcbcbc;border-radius:7px;background:#f4f4f4;"></div><div class="a" style="left:2232px;top:2356px;width:142px;height:26px;border:1px solid #a9a9a9;border-radius:2px;background:linear-gradient(#fbfbfb,#f3f3f3 50%,#e9e9e9);"></div><div class="t" style="left:2228px;width:150px;text-align:center;top:2356.0px;font-size:22px;line-height:22px;color:#2c2c2c;letter-spacing:1px;"><u>O</u>K</div><div class="a" style="left:2390px;top:2352px;width:150px;height:34px;border:1px solid #bcbcbc;border-radius:7px;background:#f4f4f4;"></div><div class="a" style="left:2394px;top:2356px;width:142px;height:26px;border:1px solid #a9a9a9;border-radius:2px;background:linear-gradient(#fbfbfb,#f3f3f3 50%,#e9e9e9);"></div><div class="t" style="left:2390px;width:150px;text-align:center;top:2356.0px;font-size:22px;line-height:22px;color:#2c2c2c;letter-spacing:1px;"><u>A</u>pply</div><div class="a" style="left:2552px;top:2352px;width:150px;height:34px;border:1px solid #bcbcbc;border-radius:7px;background:#f4f4f4;"></div><div class="a" style="left:2556px;top:2356px;width:142px;height:26px;border:1px solid #a9a9a9;border-radius:2px;background:linear-gradient(#fbfbfb,#f3f3f3 50%,#e9e9e9);"></div><div class="t" style="left:2552px;width:150px;text-align:center;top:2356.0px;font-size:22px;line-height:22px;color:#2c2c2c;letter-spacing:1px;">Cancel</div>
</div></body></html>
